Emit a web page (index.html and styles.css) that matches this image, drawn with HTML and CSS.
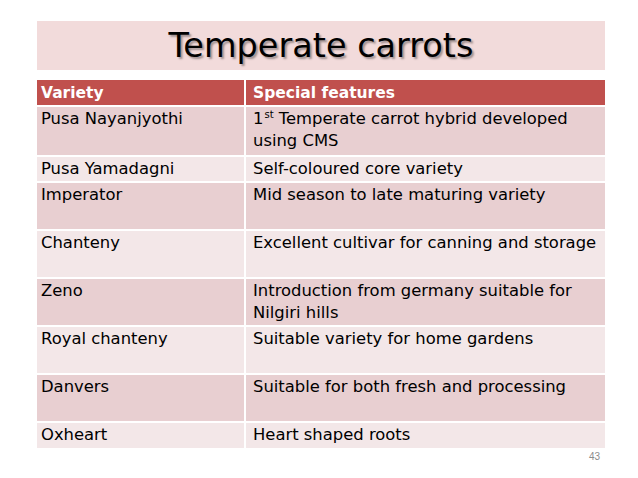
FILE: index.html
```html
<!DOCTYPE html>
<html>
<head>
<meta charset="utf-8">
<link rel="stylesheet" href="styles.css">
</head>
<body>
<div class="slide">
  <div class="title-box"><h1 class="title">Temperate carrots</h1></div>
  <div class="table">
    <div class="cell head">Variety</div><div class="cell head">Special features</div>
    <div class="cell dark r-two">Pusa Nayanjyothi</div><div class="cell dark r-two">1<sup class="sup">st</sup> Temperate carrot hybrid developed using CMS</div>
    <div class="cell light r-short">Pusa Yamadagni</div><div class="cell light r-short">Self-coloured core variety</div>
    <div class="cell dark r-mid">Imperator</div><div class="cell dark r-mid">Mid season to late maturing variety</div>
    <div class="cell light r-mid">Chanteny</div><div class="cell light r-mid">Excellent cultivar for canning and storage</div>
    <div class="cell dark r-mid">Zeno</div><div class="cell dark r-mid">Introduction from germany suitable for Nilgiri hills</div>
    <div class="cell light r-mid">Royal chanteny</div><div class="cell light r-mid">Suitable variety for home gardens</div>
    <div class="cell dark r-mid">Danvers</div><div class="cell dark r-mid">Suitable for both fresh and processing</div>
    <div class="cell light r-last">Oxheart</div><div class="cell light r-last">Heart shaped roots</div>
  </div>
  <div class="page-num">43</div>
</div>
</body>
</html>
```
FILE: styles.css
```css
html, body {
  margin: 0;
  padding: 0;
  background: #ffffff;
}
.slide {
  width: 638px;
  height: 478px;
  padding: 21px 0 0 37px;
  box-sizing: border-box;
  font-family: "DejaVu Sans", sans-serif;
}
.title-box {
  width: 568px;
  height: 49px;
  background: #f2dbdb;
  display: flex;
  align-items: center;
  justify-content: center;
}
.title {
  margin: 0;
  font-size: 33.5px;
  font-weight: normal;
  color: #000;
  text-shadow: 2px 2px 2px rgba(0,0,0,0.35);
}
.table {
  margin-top: 10px;
  width: 568px;
  display: grid;
  grid-template-columns: 207px 1fr;
  column-gap: 2px;
  row-gap: 2px;
  grid-template-rows: 25px 48px 24px 46px 46px 46px 46px 46px 25px;
}
.cell {
  font-size: 16.4px;
  line-height: 22px;
  padding: 1px 4px 0 4px;
  color: #000;
  box-sizing: border-box;
}
.cell:nth-child(even) {
  padding-left: 7px;
}
.head {
  background: #c0504d;
  color: #fff;
  font-weight: bold;
  font-size: 15.5px;
  padding-top: 2px;
}
.dark {
  background: #e8cfd1;
}
.light {
  background: #f3e7e8;
}
.sup {
  font-size: 10px;
  vertical-align: 6px;
  line-height: 0;
  margin-left: 1px;
}
.page-num {
  width: 563px;
  text-align: right;
  margin-top: 3px;
  font-family: "Liberation Sans", sans-serif;
  font-size: 10px;
  color: #8c8c8c;
}
```
